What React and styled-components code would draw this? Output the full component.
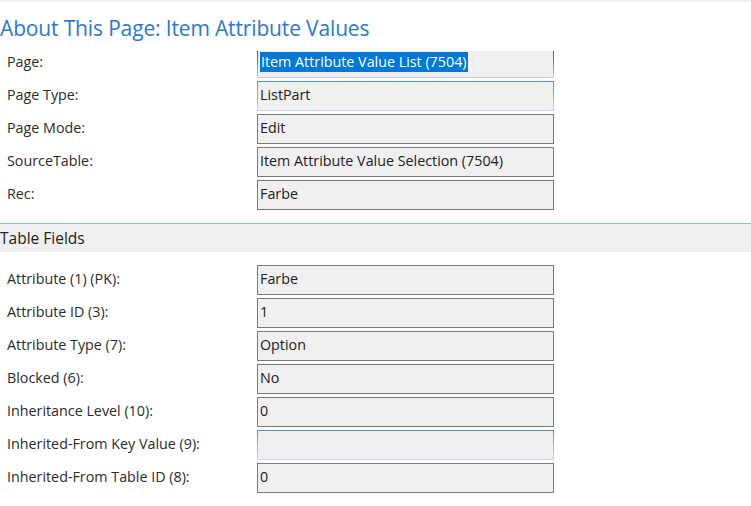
import React from "react";
import styled, { createGlobalStyle, css } from "styled-components";

const Global = createGlobalStyle`
  html, body {
    margin: 0;
    padding: 0;
    background: #ffffff;
  }
  body {
    font-family: "Open Sans", "Noto Sans", sans-serif;
    color: #262626;
  }
`;

const Page = styled.div`
  width: 751px;
  height: 506px;
  overflow: hidden;
  border-top: 2px solid #f2f2f2;
  box-sizing: border-box;
`;

const Title = styled.h1`
  margin: 0;
  height: 49px;
  padding-top: 13px;
  box-sizing: border-box;
  font-weight: normal;
  font-size: 21px;
  letter-spacing: -0.15px;
  color: #2b79cf;
  line-height: 26px;
  white-space: nowrap;
`;

const Scroll = styled.div`
  overflow: hidden;
`;

const Inner = styled.div`
  margin-top: -3px;
`;

const Row = styled.div`
  display: flex;
  align-items: center;
  height: 33px;
  padding-left: 7px;
`;

const Label = styled.div`
  width: 250px;
  font-size: 14.3px;
  color: #2b2b2b;
  margin-top: -6px;
  white-space: nowrap;
`;

const Box = styled.div`
  width: 297px;
  height: 30px;
  box-sizing: border-box;
  align-self: flex-start;
  background: #f0f0f0;
  border: 1px solid #7a7a7a;
  font-size: 14.3px;
  line-height: 20px;
  color: #222;
  padding: 3px 0 0 2px;
  white-space: nowrap;

  ${(p) =>
    p.$state === "focus" &&
    css`
      border: 1px solid;
      border-image: linear-gradient(#3e2f7c, #cfc9e2) 1;
    `}
  ${(p) =>
    p.$state === "hover" &&
    css`
      border: 1px solid;
      border-image: linear-gradient(#4f91d4, #c6dcf1) 1;
    `}
`;

const Selected = styled.span`
  display: inline-block;
  background: #0078d7;
  color: #ffffff;
  padding: 0 1px;
  line-height: 20px;
`;

const Divider = styled.div`
  margin-top: 10px;
  border-top: 1px solid #8cb8e8;
  background: #f0f0f0;
  height: 28px;
  display: flex;
  align-items: center;
  font-size: 15.5px;
  color: #222;
  margin-bottom: 13px;
`;

const general = [
  { label: "Page:", value: "Item Attribute Value List (7504)", state: "focus", selected: true },
  { label: "Page Type:", value: "ListPart", state: "hover" },
  { label: "Page Mode:", value: "Edit" },
  { label: "SourceTable:", value: "Item Attribute Value Selection (7504)" },
  { label: "Rec:", value: "Farbe" },
];

const fields = [
  { label: "Attribute (1) (PK):", value: "Farbe" },
  { label: "Attribute ID (3):", value: "1" },
  { label: "Attribute Type (7):", value: "Option" },
  { label: "Blocked (6):", value: "No" },
  { label: "Inheritance Level (10):", value: "0" },
  { label: "Inherited-From Key Value (9):", value: "", state: "hover" },
  { label: "Inherited-From Table ID (8):", value: "0" },
];

const Field = ({ label, value, state, selected }) => (
  <Row>
    <Label>{label}</Label>
    <Box $state={state}>{selected ? <Selected>{value}</Selected> : value}</Box>
  </Row>
);

const App = () => {
  return (
    <>
      <Global />
      <Page>
        <Title>About This Page: Item Attribute Values</Title>
        <Scroll>
          <Inner>
            {general.map((f) => (
              <Field key={f.label} {...f} />
            ))}
            <Divider>Table Fields</Divider>
            {fields.map((f) => (
              <Field key={f.label} {...f} />
            ))}
          </Inner>
        </Scroll>
      </Page>
    </>
  );
};

export default App;
